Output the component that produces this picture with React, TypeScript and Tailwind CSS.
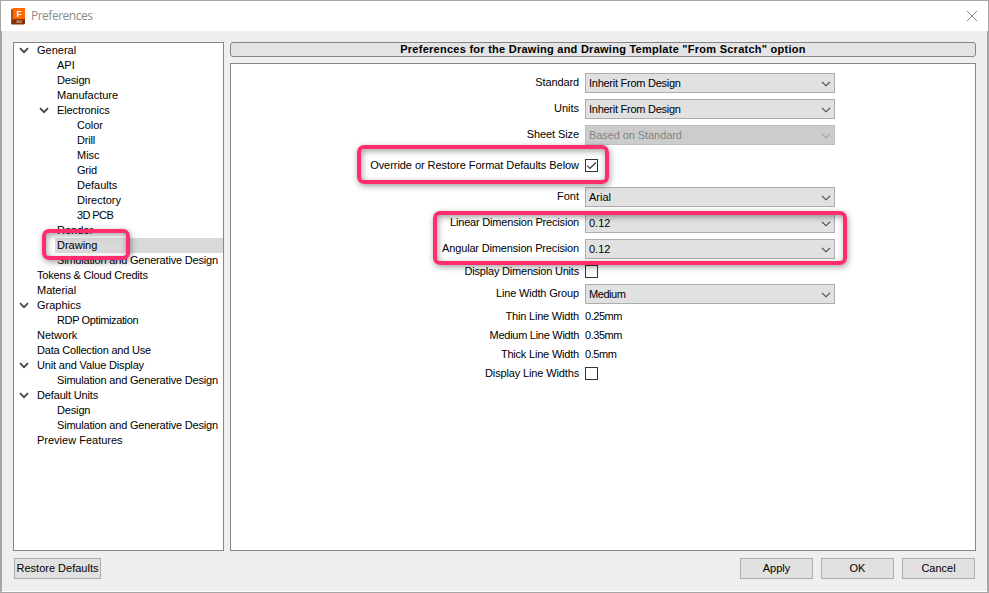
import React from "react";

type Item = { label: string; level: number; track?: string; open?: boolean; selected?: boolean };

const items: Item[] = [
  { label: "General", level: 0, open: true },
  { label: "API", level: 1 },
  { label: "Design", level: 1, track: "tracking-[-0.15px]" },
  { label: "Manufacture", level: 1 },
  { label: "Electronics", level: 1, open: true, track: "tracking-[-0.1px]" },
  { label: "Color", level: 2, track: "tracking-[-0.1px]" },
  { label: "Drill", level: 2, track: "tracking-[-0.2px]" },
  { label: "Misc", level: 2 },
  { label: "Grid", level: 2, track: "tracking-[-0.2px]" },
  { label: "Defaults", level: 2 },
  { label: "Directory", level: 2 },
  { label: "3D PCB", level: 2, track: "tracking-[-0.6px]" },
  { label: "Render", level: 1 },
  { label: "Drawing", level: 1 , selected: true },
  { label: "Simulation and Generative Design", level: 1, track: "tracking-[-0.19px]" },
  { label: "Tokens & Cloud Credits", level: 0, track: "tracking-[-0.19px]" },
  { label: "Material", level: 0 },
  { label: "Graphics", level: 0, open: true },
  { label: "RDP Optimization", level: 1, track: "tracking-[-0.38px]" },
  { label: "Network", level: 0 },
  { label: "Data Collection and Use", level: 0, track: "tracking-[-0.2px]" },
  { label: "Unit and Value Display", level: 0, open: true, track: "tracking-[-0.16px]" },
  { label: "Simulation and Generative Design", level: 1, track: "tracking-[-0.19px]" },
  { label: "Default Units", level: 0, open: true, track: "tracking-[-0.15px]" },
  { label: "Design", level: 1, track: "tracking-[-0.15px]" },
  { label: "Simulation and Generative Design", level: 1, track: "tracking-[-0.19px]" },
  { label: "Preview Features", level: 0 },
];

const indent = ["w-[3px]", "w-[23px]", "w-[43px]"];

function TreeRow({ item }: { item: Item }) {
  return (
    <div className="flex h-[15px] shrink-0">
      <div className={`shrink-0 ${indent[item.level]}`} />
      <div className="flex w-[18px] shrink-0 items-center pl-[2px]">
        {item.open && (
          <svg width="10" height="7" viewBox="0 0 10 7" fill="none" className="-ml-[0.5px]">
            <path d="M1 1.2L5 5.2L9 1.2" stroke="#454545" strokeWidth="1.8" />
          </svg>
        )}
      </div>
      <div
        className={`flex-1 whitespace-nowrap pl-[2px] leading-[15px] ${item.track ?? ""} ${
          item.selected ? "bg-[#d9d9d9]" : ""
        }`}
      >
        {item.label}
      </div>
    </div>
  );
}

type RowProps = { label: string; track?: string; className: string; labelClass?: string; children: React.ReactNode };

function Row({ label, track = "", className, labelClass = "pb-[2px]", children }: RowProps) {
  return (
    <div className={`flex shrink-0 items-center ${className}`}>
      <div className={`w-[348px] shrink-0 whitespace-nowrap text-right leading-[14px] ${track} ${labelClass}`}>
        {label}
      </div>
      <div className="ml-[6px] flex items-center">{children}</div>
    </div>
  );
}

function Combo({ value, track = "", disabled }: { value: string; track?: string; disabled?: boolean }) {
  return (
    <div
      className={`flex h-5 w-[250px] items-center justify-between border pl-[3px] pr-[3px] ${
        disabled ? "border-[#bfbfbf] bg-[#cccccc] text-[#838383]" : "border-[#adadad] bg-[#e1e1e1]"
      }`}
    >
      <span className={`pt-px leading-[17px] ${track}`}>{value}</span>
      <svg width="10" height="6" viewBox="0 0 10 6" fill="none" className="mt-[2px]">
        <path d="M1 0.8L5 4.8L9 0.8" stroke={disabled ? "#a3a3a3" : "#444444"} strokeWidth="1.15" />
      </svg>
    </div>
  );
}

function Check({ checked }: { checked?: boolean }) {
  return (
    <div className="h-[13px] w-[13px] border border-[#333333] bg-white">
      {checked && (
        <svg width="11" height="11" viewBox="0 0 11 11" fill="none">
          <path d="M1.2 5.6L4 8.4L9.8 2.5" stroke="#333333" strokeWidth="1.2" />
        </svg>
      )}
    </div>
  );
}

function Button({ label, className }: { label: string; className: string }) {
  return (
    <button className={`h-[21px] border border-[#adadad] bg-[#e1e1e1] text-center leading-[19px] ${className}`}>
      {label}
    </button>
  );
}

function Callout({ className }: { className: string }) {
  return (
    <div
      className={`pointer-events-none absolute rounded-[7px] border-4 border-[#ff2d6b] shadow-[1px_2px_6px_rgba(0,0,0,0.38),inset_1px_2px_6px_rgba(0,0,0,0.38)] ${className}`}
    />
  );
}

export default function App() {
  return (
    <div className="relative flex h-[593px] w-[989px] flex-col overflow-hidden border border-[#a6a6a6] bg-[#efefef] font-['Liberation_Sans',Arial,sans-serif] text-[11px] text-black">
      <header className="flex h-[30px] shrink-0 items-center bg-white pl-[10px] pr-[10px]">
        <svg width="15" height="17" viewBox="0 0 15 17" className="shrink-0">
          <path d="M0 1.5L3 0V15L0 16Z" fill="#b84a05" />
          <rect x="2" y="0" width="12" height="12" fill="#ff6b00" />
          <path d="M0 16L2 11H14V15.5L13 16.5H1Z" fill="#853300" />
          <text x="8" y="9" textAnchor="middle" fontSize="8.5" fontWeight="bold" fill="#fff" fontFamily="Liberation Sans, sans-serif">F</text>
          <text x="8" y="15" textAnchor="middle" fontSize="3.5" fontWeight="bold" fill="#e3b99c" fontFamily="Liberation Sans, sans-serif">360</text>
        </svg>
        <span className="ml-[5px] flex-1 font-['Open_Sans',sans-serif] text-[12px] tracking-[-0.5px] text-[#8c8c8c]">
          Preferences
        </span>
        <svg width="12" height="12" viewBox="0 0 12 12" fill="none" className="mb-px">
          <path d="M1 1L11 11M11 1L1 11" stroke="#858585" strokeWidth="1" />
        </svg>
      </header>

      <div className="flex flex-1 flex-col border-x border-b border-x-[#a6a6a6] border-b-white">
        <div className="flex h-[520px] shrink-0 pl-[11px] pt-[11px]">
          <nav className="flex h-[509px] w-[211px] shrink-0 flex-col border border-[#828790] bg-white">
            {items.map((item, i) => (
              <TreeRow key={i} item={item} />
            ))}
          </nav>
          <main className="ml-[6px] flex w-[746px] shrink-0 flex-col">
            <h1 className="h-[15px] shrink-0 rounded-[3px] border border-[#858585] bg-[#e4e4e4] text-center text-[11px] font-bold leading-[13px] tracking-[0.26px]">
              Preferences for the Drawing and Drawing Template "From Scratch" option
            </h1>
            <section className="mt-[6px] flex h-[488px] flex-col border border-[#828790] bg-white pt-[9px]">
              <Row label="Standard" track="tracking-[-0.12px]" className="h-5">
                <Combo value="Inherit From Design" track="tracking-[-0.26px]" />
              </Row>
              <Row label="Units" className="mt-[6px] h-5">
                <Combo value="Inherit From Design" track="tracking-[-0.26px]" />
              </Row>
              <Row label="Sheet Size" track="tracking-[-0.1px]" className="mt-[6px] h-5">
                <Combo value="Based on Standard" track="tracking-[-0.08px]" disabled />
              </Row>
              <Row label="Override or Restore Format Defaults Below" track="tracking-[-0.05px]" className="mt-[14px] h-[13px]">
                <Check checked />
              </Row>
              <Row label="Font" className="mt-[15px] h-5">
                <Combo value="Arial" />
              </Row>
              <Row label="Linear Dimension Precision" track="tracking-[-0.19px]" className="mt-[6px] h-5">
                <Combo value="0.12" />
              </Row>
              <Row label="Angular Dimension Precision" track="tracking-[-0.16px]" className="mt-[6px] h-5">
                <Combo value="0.12" />
              </Row>
              <Row label="Display Dimension Units" track="tracking-[-0.21px]" className="mt-[6px] h-[13px]">
                <Check />
              </Row>
              <Row label="Line Width Group" track="tracking-[-0.16px]" className="mt-[6px] h-5">
                <Combo value="Medium" track="tracking-[-0.45px]" />
              </Row>
              <Row label="Thin Line Width" track="tracking-[-0.2px]" labelClass="" className="mt-[5px] h-[14px]">
                <span className="tracking-[-0.45px]">0.25mm</span>
              </Row>
              <Row label="Medium Line Width" track="tracking-[-0.28px]" labelClass="" className="mt-[5px] h-[14px]">
                <span className="tracking-[-0.45px]">0.35mm</span>
              </Row>
              <Row label="Thick Line Width" track="tracking-[-0.2px]" labelClass="" className="mt-[5px] h-[14px]">
                <span className="tracking-[-0.45px]">0.5mm</span>
              </Row>
              <Row label="Display Line Widths" track="tracking-[-0.14px]" className="mt-[6px] h-[13px]">
                <Check />
              </Row>
            </section>
          </main>
        </div>

        <footer className="flex pl-[12px] pr-[12px] pt-[7px]">
          <Button label="Restore Defaults" className="w-[87px] whitespace-nowrap" />
          <div className="ml-auto flex gap-2">
            <Button label="Apply" className="w-[73px]" />
            <Button label="OK" className="w-[73px]" />
            <Button label="Cancel" className="w-[73px]" />
          </div>
        </footer>
      </div>

      <Callout className="left-[356px] top-[144px] h-[39px] w-[252px]" />
      <Callout className="left-[432px] top-[210px] h-[54px] w-[414px]" />
      <Callout className="left-[41px] top-[228px] h-[31px] w-[88px]" />
    </div>
  );
}
